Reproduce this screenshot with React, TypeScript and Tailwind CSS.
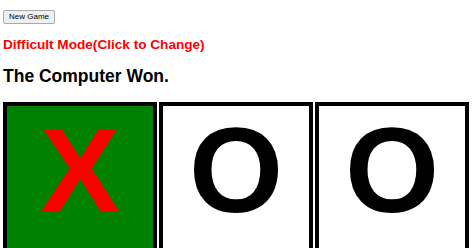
import React from "react";

type Mark = "X" | "O" | "";

const BOARD: { mark: Mark; win?: boolean }[] = [
  { mark: "X", win: true },
  { mark: "O" },
  { mark: "O" },
];

export default function App() {
  return (
    <div className="h-[248px] w-[474px] overflow-hidden bg-white font-['Liberation_Sans',Arial,sans-serif]">
      <div className="flex pl-[3px] pt-[10px]">
        <button
          type="button"
          className="block h-[14px] rounded-[2px] border border-[#a9a9a9] bg-[#efefef] px-[5px] text-[8px] leading-none text-black"
        >
          New Game
        </button>
      </div>

      <p className="mt-[13px] pl-[3px] text-[13.6px] font-bold leading-[16px] text-[#ff0000]">
        Difficult Mode(Click to Change)
      </p>

      <h1 className="mt-[12px] pl-[3px] text-[17.5px] font-bold leading-[22px] text-black">
        The Computer Won.
      </h1>

      {/* board row */}
      <div className="mt-[15px] flex gap-[2px] pl-[3px]">
        {BOARD.map((cell, i) => (
          <div
            key={i}
            className={`flex h-[154px] w-[154px] shrink-0 items-center justify-center border-4 border-black ${
              cell.win ? "bg-[#008000]" : "bg-white"
            }`}
          >
            <span
              className={`pb-[18px] text-[121px] font-bold leading-none ${
                cell.mark === "X" ? "text-[#ff0000]" : "text-black"
              }`}
            >
              {cell.mark}
            </span>
          </div>
        ))}
      </div>
    </div>
  );
}
